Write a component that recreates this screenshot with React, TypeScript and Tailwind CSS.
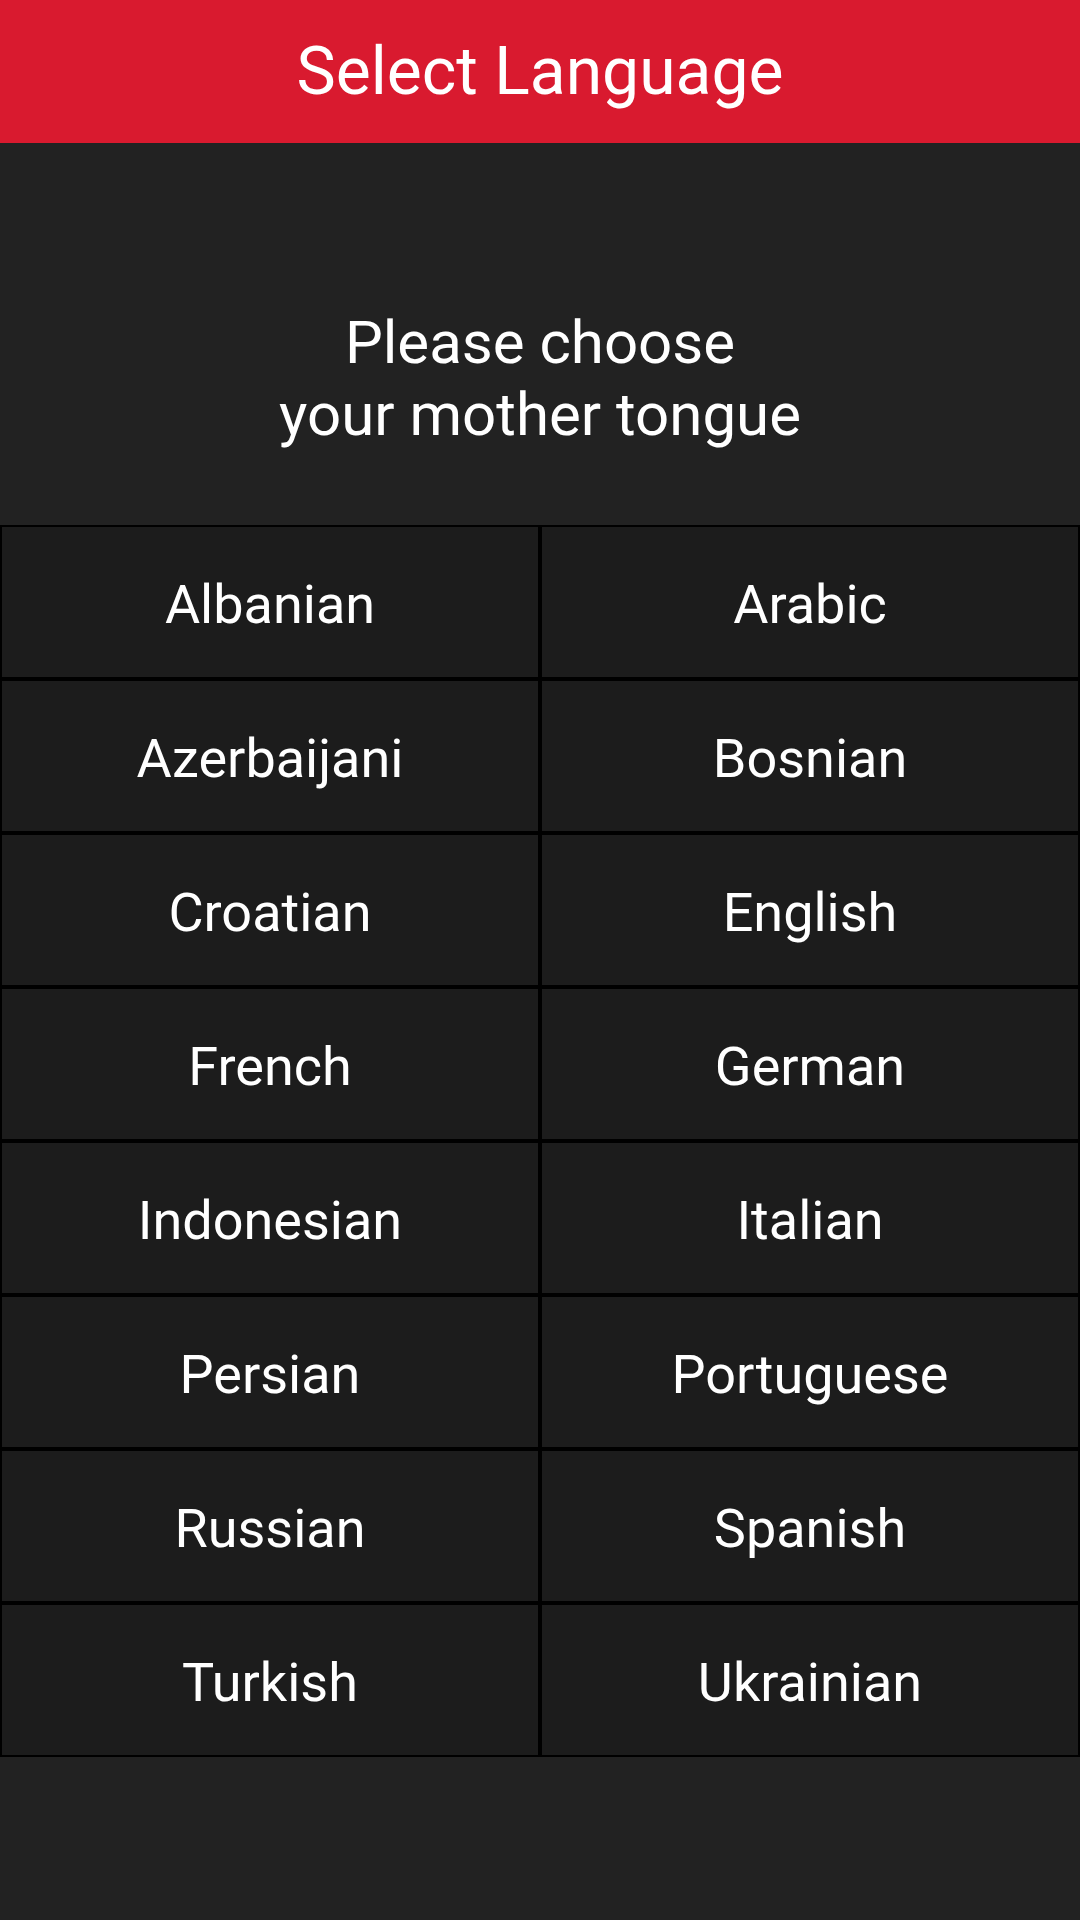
import React from "react";

const languages = [
  "Albanian",
  "Arabic",
  "Azerbaijani",
  "Bosnian",
  "Croatian",
  "English",
  "French",
  "German",
  "Indonesian",
  "Italian",
  "Persian",
  "Portuguese",
  "Russian",
  "Spanish",
  "Turkish",
  "Ukrainian",
];

export default function App() {
  return (
    <div className="min-h-[1920px] w-[1080px] bg-[#222222] font-['Roboto',sans-serif] text-white">
      {/* Top bar */}
      <div className="flex h-[143px] items-center justify-center bg-[#d91a2f]">
        <h1 className="text-[66px] font-normal leading-none">Select Language</h1>
      </div>

      <div className="pt-[164px] pb-[74px] text-center text-[60px] leading-[72px]">
        <p>Please choose</p>
        <p>your mother tongue</p>
      </div>

      <div className="grid grid-cols-2">
        {languages.map((lang) => (
          <button
            key={lang}
            className="flex h-[154px] items-center justify-center border-2 border-black bg-[#1c1c1c] pt-[5px] text-[54px] leading-none text-white"
          >
            {lang}
          </button>
        ))}
      </div>
    </div>
  );
}
